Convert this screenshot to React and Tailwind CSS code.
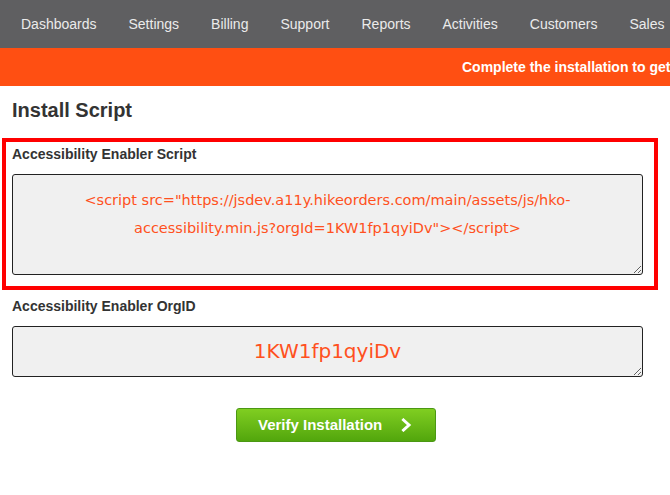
import React from 'react';

const navItems = ['Dashboards', 'Settings', 'Billing', 'Support', 'Reports', 'Activities', 'Customers', 'Sales', 'Help'];

const scriptTag =
  '<script src="https://jsdev.a11y.hikeorders.com/main/assets/js/hko-accessibility.min.js?orgId=1KW1fp1qyiDv"></script>';

export default function App() {
  return (
    <div className="w-[670px] min-h-[495px] overflow-hidden bg-white font-['Liberation_Sans',Arial,sans-serif]">
      {/* Top nav */}
      <nav className="flex h-12 items-center whitespace-nowrap bg-[#5f5f61] pl-[5px]">
        {navItems.map((item) => (
          <a key={item} className="px-4 text-[14px] text-[#ebebeb]">
            {item}
          </a>
        ))}
      </nav>

      {/* Banner */}
      <div className="flex h-[38px] items-center whitespace-nowrap bg-[#ff4f12] pl-[462px] text-[14px] font-bold text-white">
        Complete the installation to get started with Accessibility Enabler
      </div>

      <div className="pl-[2px]">
        <h2 className="mt-[10px] pl-[10px] text-[20px] font-bold leading-[28px] text-[#333]">Install Script</h2>

        {/* Script box */}
        <div className="mt-[14px] w-[656px] border-4 border-[#ff0000] px-[6px] pt-[2px] pb-[11px]">
          <label className="block text-[14px] font-bold leading-5 text-[#333]">Accessibility Enabler Script</label>
          <textarea
            readOnly
            value={scriptTag}
            className="mt-[10px] block h-[101px] w-[631px] rounded-[3px] border border-[#222] bg-[#f0f0f0] px-4 pt-[11px] text-center font-['DejaVu_Sans',sans-serif] text-[14.5px] leading-[28px] text-[#ff5020] outline-none"
          />
        </div>

        <div className="pl-[10px]">
          <label className="mt-[6px] block text-[14px] font-bold leading-5 text-[#333]">Accessibility Enabler OrgID</label>
          <textarea
            readOnly
            value="1KW1fp1qyiDv"
            className="mt-[10px] block h-[51px] w-[631px] rounded-[3px] border border-[#222] bg-[#f0f0f0] px-4 pt-[9px] text-center font-['DejaVu_Sans',sans-serif] text-[20px] leading-[30px] text-[#ff5020] outline-none"
          />

          <button className="mt-[31px] ml-[224px] flex h-[34px] w-[200px] items-center rounded-[3px] border border-[#4b9813] bg-gradient-to-b from-[#80ce21] to-[#52a60c] pl-[21px] text-[15px] font-bold text-white">
            <span>Verify Installation</span>
            <svg className="ml-[19px]" width="11" height="14" viewBox="0 0 11 14" fill="none">
              <path d="M2.5 2 L8 7 L2.5 12" stroke="white" strokeWidth="3" strokeLinecap="square" />
            </svg>
          </button>
        </div>
      </div>
    </div>
  );
}
